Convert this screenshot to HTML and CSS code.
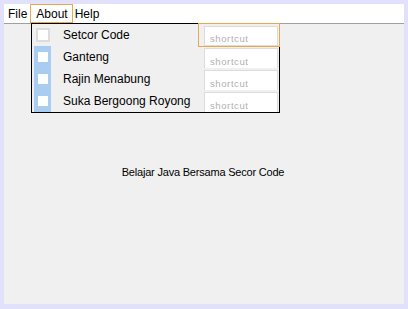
FILE: index.html
```html
<!DOCTYPE html>
<html>
<head>
<meta charset="utf-8">
<link rel="stylesheet" href="styles.css">
</head>
<body>
<div class="window">
  <div class="menubar">
    <span class="menu file">File</span>
    <span class="menu about">About</span>
    <span class="menu help">Help</span>
  </div>
  <div class="content">
    <p class="label">Belajar Java Bersama Secor Code</p>
  </div>
  <div class="dropdown">
    <div class="row first">
      <span class="gutter"><span class="check"></span></span>
      <span class="text">Setcor Code</span>
      <span class="slot"><span class="shortcut">shortcut</span></span>
    </div>
    <div class="row">
      <span class="gutter"><span class="check"></span></span>
      <span class="text">Ganteng</span>
      <span class="slot"><span class="shortcut">shortcut</span></span>
    </div>
    <div class="row">
      <span class="gutter"><span class="check"></span></span>
      <span class="text">Rajin Menabung</span>
      <span class="slot"><span class="shortcut">shortcut</span></span>
    </div>
    <div class="row">
      <span class="gutter"><span class="check"></span></span>
      <span class="text">Suka Bergoong Royong</span>
      <span class="slot"><span class="shortcut">shortcut</span></span>
    </div>
  </div>
</div>
</body>
</html>
```
FILE: styles.css
```css
html, body {
  margin: 0;
  padding: 0;
  background: #e1e1fb;
  font-family: "Liberation Sans", Arial, sans-serif;
}
.window {
  position: relative;
  margin: 4px;
  width: 400px;
  height: 300px;
  display: flex;
  flex-direction: column;
  background: #f0f0f0;
}
.menubar {
  height: 19px;
  background: #fff;
  border-bottom: 1px solid #a0a0a0;
  display: flex;
  align-items: stretch;
  font-size: 12px;
  color: #000;
}
.menu {
  display: flex;
  align-items: center;
  border: 1px solid transparent;
}
.file {
  padding: 0 2px 0 3px;
}
.about {
  padding: 0 4px 0 5px;
  border-color: #e8a84c;
}
.help {
  padding: 0 3px 0 1px;
}
.content {
  flex: 1;
  display: flex;
  justify-content: center;
  padding-top: 142px;
}
.label {
  margin: 0;
  font-size: 11px;
  height: 14px;
  letter-spacing: -0.2px;
  padding-right: 2px;
}
.dropdown {
  position: absolute;
  left: 27px;
  top: 19px;
  width: 247px;
  height: 88px;
  border: 1px solid #000;
  background: #f0f0f0;
  display: flex;
  flex-direction: column;
}
.row {
  height: 22px;
  display: flex;
  align-items: center;
  font-size: 12px;
}
.gutter {
  width: 17px;
  align-self: stretch;
  margin-left: 2px;
  background: #a9cdf0;
  display: flex;
  align-items: center;
  justify-content: center;
}
.row.first .gutter {
  background: #f0f0f0;
}
.check {
  width: 10px;
  height: 10px;
  background: #fff;
  border: 2px solid #a9cdf0;
  box-sizing: content-box;
}
.row.first .check {
  border-color: #dcdcdc;
}
.text {
  margin-left: 12px;
  flex: 1;
}
.slot {
  align-self: stretch;
  width: 82px;
  margin-right: -1px;
  border: 1px solid transparent;
  border-bottom: none;
  box-sizing: border-box;
  display: flex;
  justify-content: flex-end;
  padding-top: 1px;
  padding-right: 1px;
}
.row.first .slot {
  position: relative;
  z-index: 1;
  align-self: flex-start;
  margin-top: -1px;
  height: 24px;
  flex: none;
  border: 1px solid #e8a84c;
  padding-top: 2px;
}
.shortcut {
  width: 74px;
  background: #fff;
  border: 1px solid #dcdcdc;
  border-bottom: none;
  color: #b0b0b0;
  font-size: 9.5px;
  display: flex;
  align-items: flex-end;
  padding-left: 5px;
  padding-bottom: 1px;
  box-sizing: border-box;
  letter-spacing: 0.6px;
}
.row.first .shortcut {
  border-bottom: 1px solid #dcdcdc;
}
```
